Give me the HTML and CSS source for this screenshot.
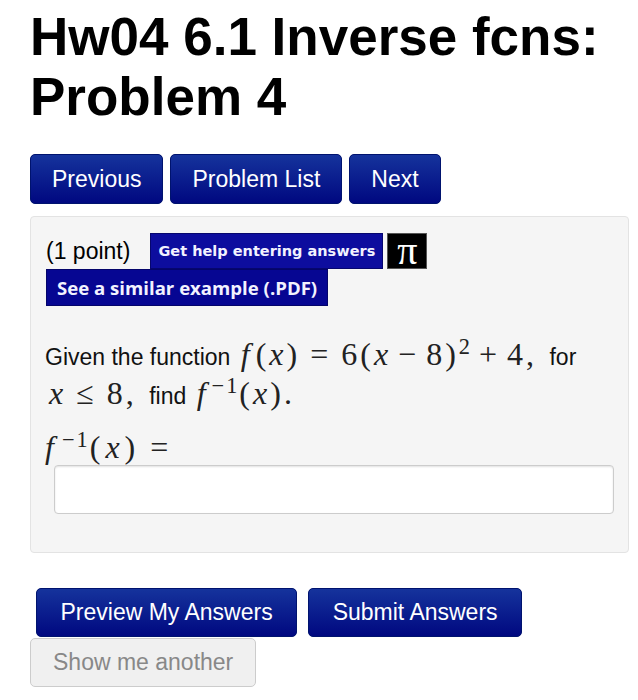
FILE: index.html
```html
<!DOCTYPE html>
<html lang="en">
<head>
    <meta charset="UTF-8">
    <meta name="viewport" content="width=device-width, initial-scale=1.0">
    <title>Hw04 6.1 Inverse fcns: Problem 4</title>
    <link rel="stylesheet" href="styles.css">
</head>
<body>
    <div class="page">
        <h1 class="problem-title">Hw04 6.1 Inverse fcns: Problem 4</h1>

        <div class="nav-buttons">
            <button class="nav-button">Previous</button>
            <button class="nav-button">Problem List</button>
            <button class="nav-button">Next</button>
        </div>

        <div class="problem-panel">
            <div class="problem-header">
                <span class="problem-points">(1 point)</span>
                <a class="help-link" href="#">Get help entering answers</a>
                <span class="pi-icon">&pi;</span>
            </div>
            <div class="example-row">
                <a class="example-link" href="#">See a similar example (.PDF)</a>
            </div>

            <p class="problem-text">
                Given the function
                <span class="math"><i class="fn">f</i>(<i>x</i>)<span class="rel">=</span>6(<i>x</i><span class="bin">&minus;</span>8)<span class="sup">2</span><span class="bin">+</span>4,</span>
                for
                <span class="math"><i>x</i><span class="rel">&le;</span>8,</span>
                find
                <span class="math"><i class="fn">f</i><span class="sup">&minus;1</span>(<i>x</i>).</span>
            </p>

            <div class="answer-label">
                <span class="math"><i class="fn">f</i><span class="sup">&minus;1</span>(<i>x</i>)<span class="rel">=</span></span>
            </div>
            <input type="text" class="answer-input">
        </div>

        <div class="submit-buttons">
            <button class="action-button preview-button">Preview My Answers</button>
            <button class="action-button">Submit Answers</button>
        </div>
        <button class="another-button">Show me another</button>
    </div>
</body>
</html>
```

FILE: styles.css
```css
body {
    margin: 0;
    padding: 0;
    background-color: white;
    font-family: "Liberation Sans", Arial, sans-serif;
    color: #000;
}
.page {
    padding: 0 9px 0 30px;
}
.problem-title {
    margin: 7px 0 0 0;
    font-size: 53px;
    line-height: 60px;
    font-weight: bold;
}
.nav-buttons {
    display: flex;
    gap: 7px;
    margin-top: 27px;
}
.nav-button,
.action-button {
    height: 50px;
    padding: 0 21px;
    border: 1px solid #00136e;
    border-radius: 5px;
    background-color: #001a8c;
    background-image: linear-gradient(to bottom, #15339c, #000880);
    color: white;
    font-family: "Liberation Sans", Arial, sans-serif;
    font-size: 23px;
    cursor: pointer;
}
.problem-panel {
    margin-top: 12px;
    padding: 16px 14px 38px 14px;
    background-color: #f5f5f5;
    border: 1px solid #e3e3e3;
    border-radius: 4px;
}
.problem-header {
    display: flex;
    align-items: center;
    height: 36px;
}
.problem-points {
    font-size: 23px;
    margin-left: 1px;
}
.help-link {
    display: flex;
    align-items: center;
    justify-content: center;
    height: 36px;
    width: 233px;
    margin-left: 20px;
    box-sizing: border-box;
    background-color: #0d0d9e;
    border: 1px solid #06066e;
    color: #f2f2ff;
    font-family: "DejaVu Sans", sans-serif;
    font-weight: bold;
    font-size: 14.5px;
    white-space: nowrap;
    text-decoration: none;
}
.pi-icon {
    display: flex;
    align-items: center;
    justify-content: center;
    width: 40px;
    height: 36px;
    margin-left: 4px;
    box-sizing: border-box;
    background-color: #000;
    border: 1px solid #555;
    color: white;
    font-family: "Liberation Serif", serif;
    font-size: 40px;
    line-height: 1;
}
.example-row {
    display: flex;
    height: 37px;
}
.example-link {
    display: flex;
    align-items: center;
    padding: 0 10px;
    margin-left: 1px;
    background-color: #060692;
    border: 1px solid #04046a;
    color: #f2f2ff;
    font-family: "Open Sans", sans-serif;
    font-weight: bold;
    font-size: 18.6px;
    white-space: nowrap;
    text-decoration: none;
}
.problem-text {
    margin: 30px 0 0 0;
    font-size: 23px;
    line-height: 36px;
    color: #111;
}
.math {
    font-family: "Liberation Serif", "Times New Roman", serif;
    font-size: 32px;
    letter-spacing: 3px;
    white-space: nowrap;
    color: #222;
    margin: 0 6px 0 4px;
}
.math i {
    font-style: italic;
}
.math .fn {
    margin-right: 3px;
}
.math .rel {
    margin: 0 10px;
}
.math .bin {
    margin: 0 7px;
}
.math .sup {
    font-size: 0.7em;
    vertical-align: 0.5em;
    line-height: 0;
    letter-spacing: 2px;
}
.answer-label {
    margin-top: 16px;
    height: 35px;
    line-height: 35px;
}
.answer-label .math {
    margin: 0;
    letter-spacing: 5px;
}
.answer-input {
    display: block;
    box-sizing: border-box;
    width: 560px;
    height: 49px;
    margin-left: 9px;
    padding: 0 10px;
    background-color: white;
    border: 1px solid #cccccc;
    border-radius: 4px;
    box-shadow: inset 0 1px 2px rgba(0, 0, 0, 0.12);
    font-size: 20px;
}
.submit-buttons {
    display: flex;
    gap: 11px;
    margin-top: 35px;
}
.action-button {
    height: 49px;
    padding: 0 23.5px;
}
.preview-button {
    margin-left: 6px;
}
.another-button {
    display: block;
    height: 49px;
    margin-top: 1px;
    padding: 0 22px;
    background-color: #f0f0f0;
    border: 1px solid #cccccc;
    border-radius: 5px;
    color: #888888;
    font-family: "Liberation Sans", Arial, sans-serif;
    font-size: 23px;
}
```
